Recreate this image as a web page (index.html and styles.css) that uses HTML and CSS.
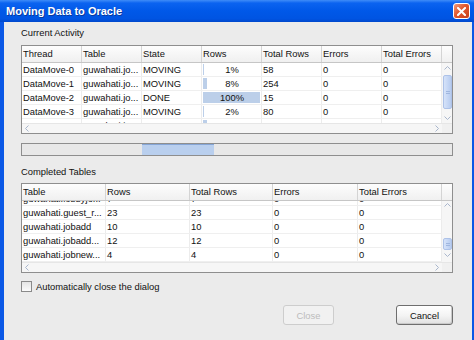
FILE: index.html
```html
<!DOCTYPE html>
<html>
<head>
<meta charset="utf-8">
<link rel="stylesheet" href="styles.css">
</head>
<body>
<div class="window">
  <div class="titlebar">
    <span class="title">Moving Data to Oracle</span>
    <span class="xbtn"><svg width="9" height="9" viewBox="0 0 9 9"><path d="M1 1L8 8M8 1L1 8" stroke="#fff" stroke-width="2" stroke-linecap="square"/></svg></span>
  </div>
  <div class="frame">
    <div class="label l1">Current Activity</div>
    <div class="table t1">
      <div class="tmain">
        <div class="thead">
          <div class="th">Thread</div><div class="th">Table</div><div class="th">State</div><div class="th">Rows</div><div class="th">Total Rows</div><div class="th">Errors</div><div class="th">Total Errors</div>
        </div>
        <div class="tbody">
          <div class="rows">
            <div class="row"><div class="td">DataMove-0</div><div class="td">guwahati.jo...</div><div class="td">MOVING</div><div class="td pct"><i class="bar" style="width:1px"></i><span>1%</span></div><div class="td">58</div><div class="td">0</div><div class="td">0</div></div>
            <div class="row"><div class="td">DataMove-1</div><div class="td">guwahati.jo...</div><div class="td">MOVING</div><div class="td pct"><i class="bar" style="width:4px"></i><span>8%</span></div><div class="td">254</div><div class="td">0</div><div class="td">0</div></div>
            <div class="row"><div class="td">DataMove-2</div><div class="td">guwahati.jo...</div><div class="td">DONE</div><div class="td pct"><i class="bar" style="width:57px"></i><span>100%</span></div><div class="td">15</div><div class="td">0</div><div class="td">0</div></div>
            <div class="row"><div class="td">DataMove-3</div><div class="td">guwahati.jo...</div><div class="td">MOVING</div><div class="td pct"><i class="bar" style="width:1px"></i><span>2%</span></div><div class="td">80</div><div class="td">0</div><div class="td">0</div></div>
            <div class="row"><div class="td">DataMove-4</div><div class="td">guwahati.jo...</div><div class="td">MOVING</div><div class="td pct"><i class="bar" style="width:4px"></i><span>7%</span></div><div class="td">104</div><div class="td">0</div><div class="td">0</div></div>
          </div>
        </div>
        <div class="hscroll">
          <svg width="4" height="7" viewBox="0 0 4 7"><path d="M3.5 0.5L0.5 3.5L3.5 6.5" fill="none" stroke="#a9b6cc" stroke-width="1"/></svg>
          <svg width="4" height="7" viewBox="0 0 4 7"><path d="M0.5 0.5L3.5 3.5L0.5 6.5" fill="none" stroke="#a9b6cc" stroke-width="1"/></svg>
        </div>
      </div>
      <div class="vcol">
        <div class="vhead"></div>
        <div class="vscroll v1">
          <svg class="up" width="7" height="4" viewBox="0 0 7 4"><path d="M0.5 3.5L3.5 0.5L6.5 3.5" fill="none" stroke="#a9b6cc" stroke-width="1"/></svg>
          <div class="thumb"><span class="grip"></span></div>
          <svg class="down" width="7" height="4" viewBox="0 0 7 4"><path d="M0.5 0.5L3.5 3.5L6.5 0.5" fill="none" stroke="#a9b6cc" stroke-width="1"/></svg>
        </div>
        <div class="vcorner"></div>
      </div>
    </div>

    <div class="progress"><div class="pfill"></div></div>

    <div class="label l2">Completed Tables</div>
    <div class="table t2">
      <div class="tmain">
        <div class="thead">
          <div class="th">Table</div><div class="th">Rows</div><div class="th">Total Rows</div><div class="th">Errors</div><div class="th">Total Errors</div>
        </div>
        <div class="tbody">
          <div class="rows rows2">
            <div class="row"><div class="td">guwahati.lobbyjo...</div><div class="td">7</div><div class="td">7</div><div class="td">0</div><div class="td">0</div></div>
            <div class="row"><div class="td">guwahati.guest_r...</div><div class="td">23</div><div class="td">23</div><div class="td">0</div><div class="td">0</div></div>
            <div class="row"><div class="td">guwahati.jobadd</div><div class="td">10</div><div class="td">10</div><div class="td">0</div><div class="td">0</div></div>
            <div class="row"><div class="td">guwahati.jobadd...</div><div class="td">12</div><div class="td">12</div><div class="td">0</div><div class="td">0</div></div>
            <div class="row"><div class="td">guwahati.jobnew...</div><div class="td">4</div><div class="td">4</div><div class="td">0</div><div class="td">0</div></div>
          </div>
        </div>
        <div class="hscroll">
          <svg width="4" height="7" viewBox="0 0 4 7"><path d="M3.5 0.5L0.5 3.5L3.5 6.5" fill="none" stroke="#a9b6cc" stroke-width="1"/></svg>
          <svg width="4" height="7" viewBox="0 0 4 7"><path d="M0.5 0.5L3.5 3.5L0.5 6.5" fill="none" stroke="#a9b6cc" stroke-width="1"/></svg>
        </div>
      </div>
      <div class="vcol">
        <div class="vhead"></div>
        <div class="vscroll v2">
          <svg class="up" width="7" height="4" viewBox="0 0 7 4"><path d="M0.5 3.5L3.5 0.5L6.5 3.5" fill="none" stroke="#a9b6cc" stroke-width="1"/></svg>
          <div class="thumb"><span class="grip"></span></div>
          <svg class="down" width="7" height="4" viewBox="0 0 7 4"><path d="M0.5 0.5L3.5 3.5L6.5 0.5" fill="none" stroke="#a9b6cc" stroke-width="1"/></svg>
        </div>
        <div class="vcorner"></div>
      </div>
    </div>

    <div class="check">
      <span class="cb"></span>
      <span>Automatically close the dialog</span>
    </div>

    <div class="buttons">
      <div class="btn btn-close">Close</div>
      <div class="btn btn-cancel">Cancel</div>
    </div>
  </div>
</div>
</body>
</html>
```

FILE: styles.css
```css
* { box-sizing: border-box; }
html, body { margin: 0; padding: 0; }
body {
  width: 474px;
  height: 340px;
  overflow: hidden;
  font-family: "Liberation Sans", Arial, sans-serif;
  font-size: 9.4px;
  color: #111;
  background: #ebebeb;
}
.window {
  display: flex;
  flex-direction: column;
  height: 340px;
}
.titlebar {
  flex: none;
  height: 22px;
  display: flex;
  align-items: center;
  justify-content: space-between;
  padding: 0 4px 0 6px;
  background: linear-gradient(to bottom, #3f8cf8 0%, #0b63f0 14%, #0058e8 50%, #0054e2 85%, #0048cc 100%);
}
.title {
  color: #fff;
  font-weight: bold;
  font-size: 11px;
  text-shadow: 1px 1px 0 #0a3a9e;
  white-space: nowrap;
}
.xbtn {
  width: 17px;
  height: 16px;
  border: 1px solid #fff;
  border-radius: 3px;
  background: linear-gradient(135deg, #f09a7a 0%, #e2582e 45%, #c8401a 100%);
  display: flex;
  align-items: center;
  justify-content: center;
}
.frame {
  flex: 1;
  border-left: 4px solid #0a58e6;
  border-right: 2px solid #0a58e6;
  background: #ebebeb;
  padding: 5px 0 0 17px;
  display: flex;
  flex-direction: column;
}
.label {
  height: 12px;
  line-height: 12px;
  white-space: nowrap;
}
.l1 { margin-bottom: 6px; }
.l2 { margin-top: 10px; }

.table {
  flex: none;
  display: flex;
  width: 432px;
  border: 1px solid #8e8e8e;
  background: #fff;
}
.t1 { height: 89px; }
.t2 { height: 90px; margin-top: 5px; }
.tmain {
  width: 420px;
  display: flex;
  flex-direction: column;
}
.thead {
  flex: none;
  display: grid;
  height: 17px;
  border-bottom: 1px solid #c6c6c6;
  background: linear-gradient(#fdfdfd, #f0f0f0);
}
.t1 .thead, .t1 .row { grid-template-columns: repeat(7, 60px); }
.t2 .thead, .t2 .row { grid-template-columns: 84px 84px 83px 85px 84px; }
.th {
  border-right: 1px solid #d4d4d4;
  padding-left: 1px;
  line-height: 16px;
  white-space: nowrap;
  overflow: hidden;
}
.tbody {
  flex: none;
  overflow: hidden;
  background: #fff;
}
.t1 .tbody { height: 60px; }
.t2 .tbody { height: 61px; }
.rows2 { margin-top: -9px; }
.row {
  display: grid;
  height: 14px;
  border-bottom: 1px solid #efefef;
}
.td {
  border-right: 1px solid #ececec;
  padding-left: 1px;
  line-height: 13px;
  white-space: nowrap;
  overflow: hidden;
}
.pct {
  position: relative;
  text-align: center;
}
.bar {
  position: absolute;
  left: 1px;
  top: 1px;
  height: 11px;
  background: #bccfe9;
}
.pct span { position: relative; }

.hscroll {
  flex: none;
  height: 10px;
  display: flex;
  align-items: center;
  justify-content: space-between;
  padding: 0 3px 0 3px;
  background: #f6f6f6;
  border-top: 1px solid #e6e6e6;
}
.hscroll svg { display: block; }

.vcol {
  width: 10px;
  display: flex;
  flex-direction: column;
}
.vhead {
  flex: none;
  height: 17px;
  border-bottom: 1px solid #c6c6c6;
  background: linear-gradient(#fdfdfd, #f0f0f0);
}
.vscroll {
  flex: 1;
  display: flex;
  flex-direction: column;
  align-items: center;
  background: #f6f6f6;
}
.vscroll svg { display: block; flex: none; }
.v1 { padding: 3px 0 3px; }
.v1 .thumb { margin-top: 5px; height: 34px; }
.v2 { padding: 2px 0 5px; }
.v2 .thumb { margin-top: 31px; height: 12px; }
.down { margin-top: auto; }
.thumb {
  flex: none;
  width: 9px;
  margin-left: 1px;
  border: 1px solid #adc2e8;
  border-radius: 2px;
  background: linear-gradient(to right, #d6e3f9, #c3d5f4 60%, #b7cbee);
  display: flex;
  align-items: center;
  justify-content: center;
}
.grip {
  width: 4px;
  height: 3px;
  border-top: 1px solid #9fb6df;
  border-bottom: 1px solid #9fb6df;
}
.vcorner {
  flex: none;
  height: 10px;
  background: #f0f0f0;
  border-top: 1px solid #e6e6e6;
}

.progress {
  flex: none;
  width: 432px;
  height: 13px;
  margin-top: 9px;
  border: 1px solid #8e8e8e;
  background: #e8e8e8;
  padding-left: 120px;
  display: flex;
}
.pfill {
  width: 72px;
  background: #b9cfee;
  border-top: 1px solid #86a6d6;
}

.check {
  flex: none;
  margin-top: 8px;
  height: 11px;
  display: flex;
  align-items: center;
  gap: 4px;
  white-space: nowrap;
}
.cb {
  flex: none;
  width: 11px;
  height: 11px;
  border: 1px solid #8a8a8a;
  background: linear-gradient(#e4e4e4, #fbfbfb);
}

.buttons {
  flex: none;
  margin-top: 13px;
  width: 432px;
  display: flex;
  justify-content: flex-end;
  gap: 62px;
}
.btn {
  height: 20px;
  border-radius: 3px;
  display: flex;
  align-items: center;
  justify-content: center;
}
.btn-close {
  width: 51px;
  border: 1px solid #cdcdcd;
  color: #bcbcbc;
  background: #f1f1f1;
}
.btn-cancel {
  width: 57px;
  border: 1px solid #6e6e6e;
  color: #111;
  background: linear-gradient(#ffffff, #f3f3f3 55%, #e0e0e0);
  box-shadow: inset -1px -1px 0 #c9c9c9;
}
```
